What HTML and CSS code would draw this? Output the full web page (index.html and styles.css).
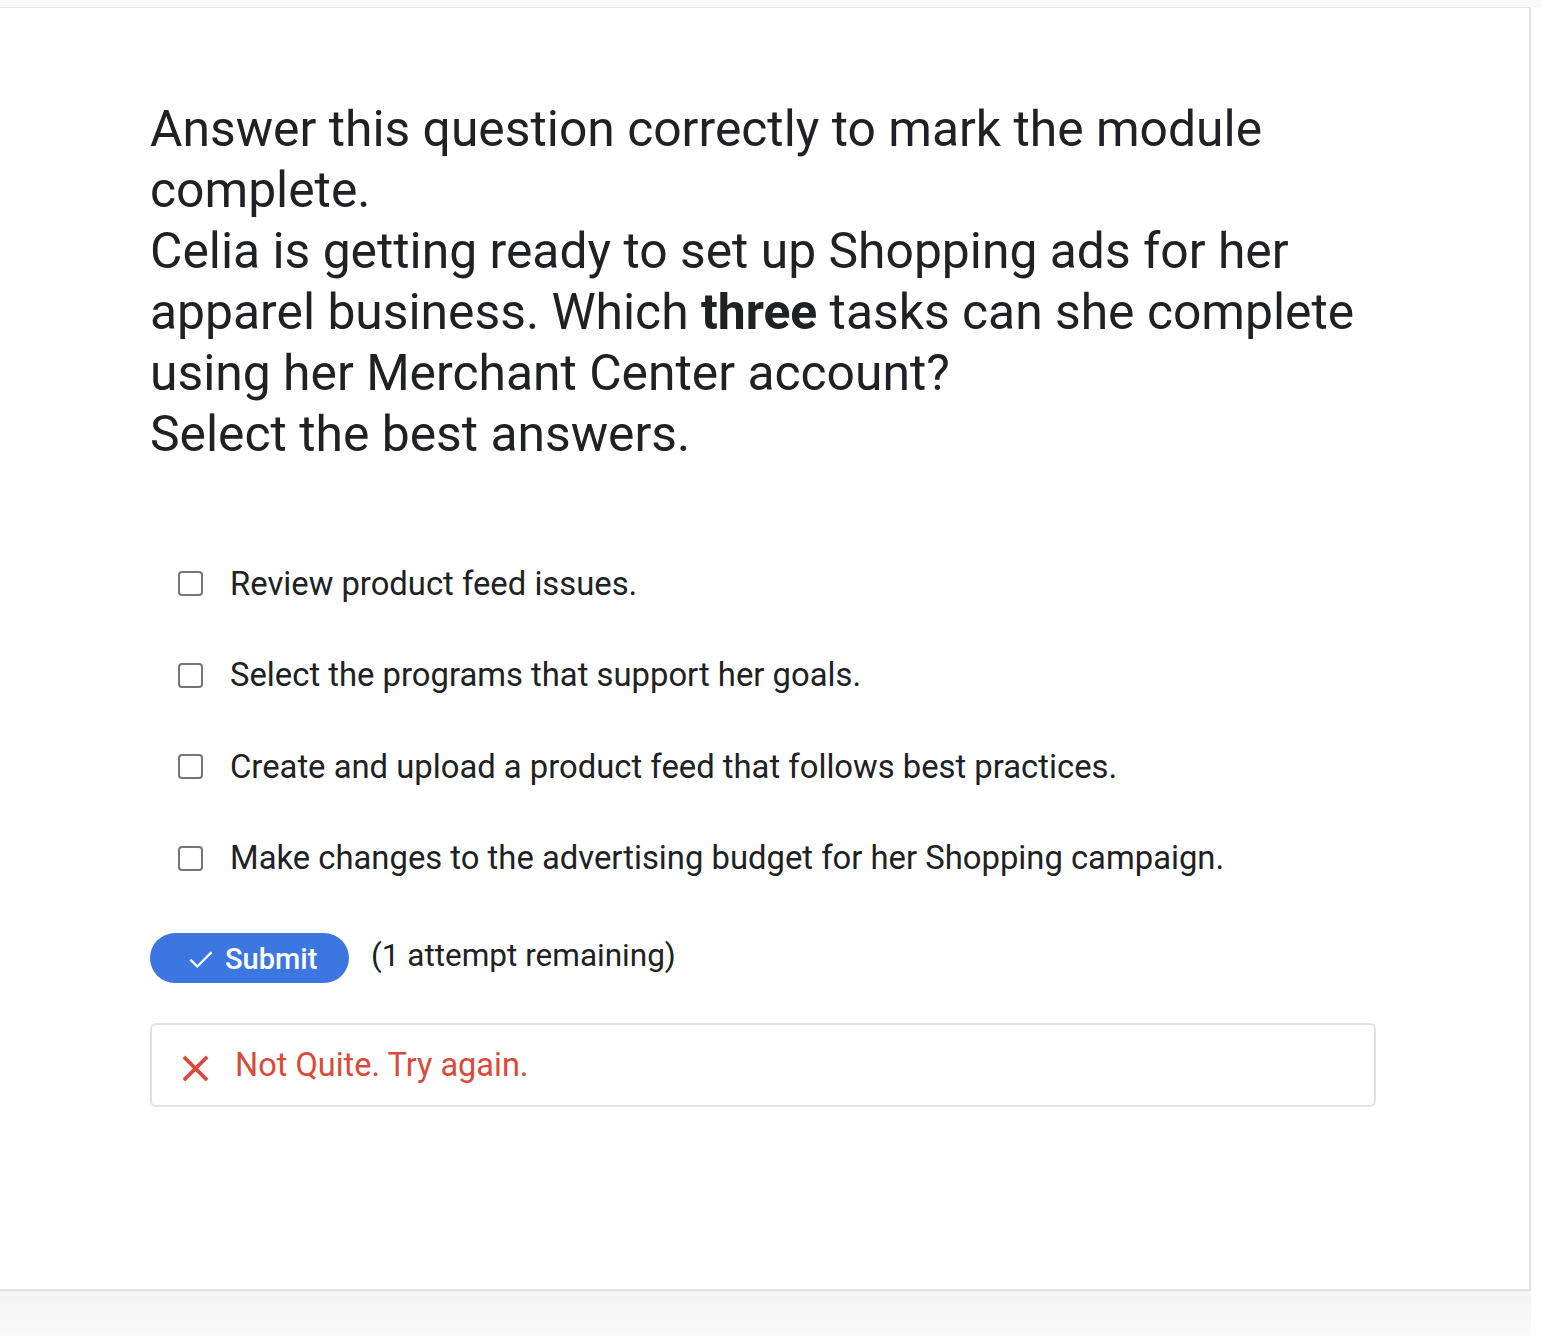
FILE: index.html
```html
<!DOCTYPE html>
<html lang="en">
<head>
<meta charset="utf-8">
<title>Quiz</title>
<link rel="stylesheet" href="styles.css">
</head>
<body>
<div class="topbar"></div>
<main class="card">
  <div class="content">
    <h1 class="question">
      <span class="line">Answer this question correctly to mark the module complete.</span>
      <span class="line">Celia is getting ready to set up Shopping ads for her apparel business. Which <b>three</b> tasks can she complete using her Merchant Center account?</span>
      <span class="line">Select the best answers.</span>
    </h1>
    <ul class="options">
      <li class="option"><span class="box"></span><span class="label">Review product feed issues.</span></li>
      <li class="option"><span class="box"></span><span class="label">Select the programs that support her goals.</span></li>
      <li class="option"><span class="box"></span><span class="label">Create and upload a product feed that follows best practices.</span></li>
      <li class="option"><span class="box"></span><span class="label">Make changes to the advertising budget for her Shopping campaign.</span></li>
    </ul>
    <div class="actions">
      <button class="submit" type="button">
        <svg class="check" viewBox="0 0 24 24" width="30" height="30"><path d="M3.5 12.5l5.5 5.5L20.5 6.5" fill="none" stroke="#fff" stroke-width="1.8"/></svg>
        <span>Submit</span>
      </button>
      <span class="attempts">(1 attempt remaining)</span>
    </div>
    <div class="feedback">
      <svg class="cross" viewBox="0 0 24 24" width="31" height="31"><path d="M3 3L21 21M21 3L3 21" fill="none" stroke="#d94a3a" stroke-width="2.8"/></svg>
      <span class="fb-text">Not Quite. Try again.</span>
    </div>
  </div>
</main>
<div class="bottom"></div>
</body>
</html>
```
FILE: styles.css
```css
* { box-sizing: border-box; }
html, body { margin: 0; padding: 0; background: #fff; }
body { font-family: Roboto, "Open Sans", sans-serif; color: #202124; }
.topbar { height: 7px; background: #f8f8f8; }
.card {
  width: 1531px;
  height: 1284px;
  border-top: 1px solid #e2e2e2;
  border-right: 2px solid #e2e2e2;
  border-bottom: 2px solid #e2e2e2;
  background: #fff;
}
.content { padding: 91px 0 0 150px; width: 1400px; }
.question { margin: 0; font-size: 49.8px; font-weight: 400; line-height: 61px; width: 1240px; }
.question .line { display: block; }
.question b { font-weight: 700; }
.options { list-style: none; margin: 73px 0 0; padding: 0 0 0 28px; }
.option { display: flex; align-items: center; height: 91.5px; gap: 27px; }
.box { width: 25px; height: 25px; border: 2px solid #757575; border-radius: 4px; flex: none; }
.label { font-size: 32.8px; }
.actions { display: flex; align-items: center; gap: 22px; margin-top: 29px; }
.submit {
  display: flex; align-items: center; gap: 9px;
  width: 199px; height: 50px; border: 0; border-radius: 25px;
  background: #3b76e1; color: #fff; padding: 2px 0 0 36px;
  font-family: inherit; font-size: 29px; font-weight: 500;
}
.check { flex: none; }
.attempts { font-size: 31.5px; padding-bottom: 5px; }
.feedback {
  display: flex; align-items: center; gap: 24px;
  margin-top: 40px; width: 1226px; height: 84px;
  border: 2px solid #e2e2e2; border-radius: 6px; padding: 0 0 0 28px;
}
.cross { flex: none; margin-top: 6px; }
.fb-text { font-size: 32.5px; color: #d94a3a; }
.bottom { height: 45px; width: 1531px; background: linear-gradient(#f3f3f3, #fafafa); }
```
